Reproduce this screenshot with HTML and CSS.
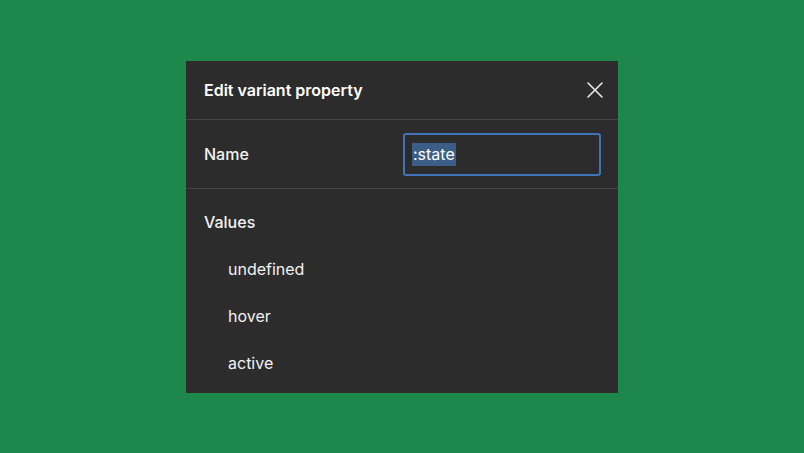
FILE: index.html
```html
<!DOCTYPE html>
<html>
<head>
<meta charset="utf-8">
<link rel="stylesheet" href="styles.css">
</head>
<body>
<div class="stage">
  <div class="dialog">
    <div class="header">
      <div class="title">Edit variant property</div>
      <svg class="close" width="18" height="18" viewBox="0 0 18 18"><path d="M2 2L16 16M16 2L2 16" stroke="#e6e6e6" stroke-width="1.6" stroke-linecap="round"/></svg>
    </div>
    <div class="name-row">
      <div class="label">Name</div>
      <div class="input"><span class="sel">:state</span></div>
    </div>
    <div class="values">
      <div class="vhead">Values</div>
      <div class="vitem">undefined</div>
      <div class="vitem">hover</div>
      <div class="vitem">active</div>
    </div>
  </div>
</div>
</body>
</html>
```
FILE: styles.css
```css
html, body {
  margin: 0;
  padding: 0;
}
body {
  width: 804px;
  height: 453px;
  background: #1e874b;
  font-family: Inter, "Noto Sans", sans-serif;
  color: #f2f2f2;
}
.stage {
  padding-top: 61px;
  padding-left: 186px;
}
.dialog {
  width: 432px;
  height: 332px;
  background: #2c2c2c;
  box-sizing: border-box;
}
.header {
  height: 59px;
  border-bottom: 1px solid #444444;
  box-sizing: border-box;
  display: flex;
  align-items: center;
  justify-content: space-between;
  padding: 0 14px 0 18px;
}
.title {
  font-size: 16px;
  font-weight: 600;
  color: #ffffff;
}
.close {
  display: block;
}
.name-row {
  height: 69px;
  border-bottom: 1px solid #444444;
  box-sizing: border-box;
  display: flex;
  align-items: center;
  justify-content: space-between;
  padding: 0 17px 0 18px;
}
.label {
  font-size: 16px;
  font-weight: 500;
}
.input {
  width: 198px;
  height: 43px;
  box-sizing: border-box;
  border: 2px solid #3f74b8;
  border-radius: 3px;
  display: flex;
  align-items: center;
  padding-left: 7px;
  font-size: 16px;
  color: #ffffff;
}
.sel {
  background: #3b5d86;
  padding: 1px 1px 2px 1px;
}
.values {
  padding-top: 10px;
}
.vhead, .vitem {
  height: 47px;
  line-height: 47px;
  font-size: 16px;
}
.vhead {
  padding-left: 18px;
  font-weight: 500;
}
.vitem {
  padding-left: 42px;
}
```
